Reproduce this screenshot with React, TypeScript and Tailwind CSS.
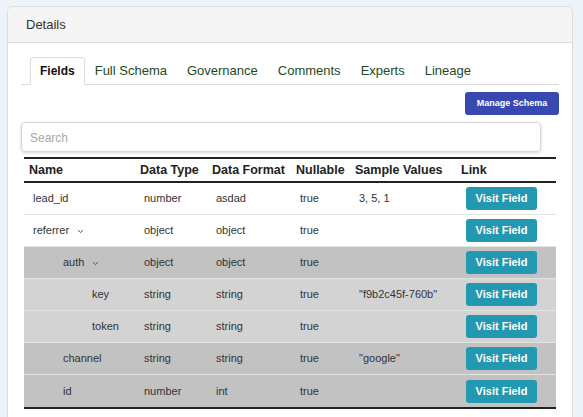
import React from 'react';

const tabs = ['Fields', 'Full Schema', 'Governance', 'Comments', 'Experts', 'Lineage'];

const cols = ['w-[111px]', 'w-[72px]', 'w-[84px]', 'w-[59px]', 'w-[106px]', 'w-[99px]'];

const rows = [
  { name: 'lead_id', type: 'number', format: 'asdad', nullable: 'true', sample: '3, 5, 1', depth: 0, bg: 'bg-white', open: false },
  { name: 'referrer', type: 'object', format: 'object', nullable: 'true', sample: '', depth: 0, bg: 'bg-white', open: true },
  { name: 'auth', type: 'object', format: 'object', nullable: 'true', sample: '', depth: 1, bg: 'bg-[#c2c2c2]', open: true },
  { name: 'key', type: 'string', format: 'string', nullable: 'true', sample: '"f9b2c45f-760b"', depth: 2, bg: 'bg-[#d3d3d3]', open: false },
  { name: 'token', type: 'string', format: 'string', nullable: 'true', sample: '', depth: 2, bg: 'bg-[#d3d3d3]', open: false },
  { name: 'channel', type: 'string', format: 'string', nullable: 'true', sample: '"google"', depth: 1, bg: 'bg-[#c2c2c2]', open: false },
  { name: 'id', type: 'number', format: 'int', nullable: 'true', sample: '', depth: 1, bg: 'bg-[#c2c2c2]', open: false },
];

const indent = ['pl-[9px]', 'pl-[39px]', 'pl-[68px]'];

function Chevron() {
  return (
    <svg width="7" height="5" viewBox="0 0 7 5" className="ml-[8px] mt-[1px]">
      <path d="M1 1.2 L3.5 3.6 L6 1.2" fill="none" stroke="#555" strokeWidth="1" />
    </svg>
  );
}

export default function App() {
  return (
    <div className="min-h-[417px] bg-[#eef2f9] pl-[7px] pr-[10px] pt-[6px] font-['Liberation_Sans',Arial,sans-serif]">
      <div className="h-[420px] rounded-[6px] border border-[#dcdcdc] bg-white overflow-hidden">
        {/* header */}
        <div className="h-[36px] bg-[#f5f5f5] border-b border-[#dcdcdc] flex items-center pl-[18px] text-[13px] text-[#333]">
          Details
        </div>

        <div className="px-[13px] pt-[14px]">
          {/* tabs */}
          <div className="flex border-b border-[#dcdcdc] pl-[9px] h-[28px]">
            {tabs.map((t, i) =>
              i === 0 ? (
                <div
                  key={t}
                  className="h-[28px] px-[9px] flex items-center border border-[#dcdcdc] border-b-white rounded-t-[4px] bg-white text-[12px] font-bold text-[#111] -mb-px"
                >
                  {t}
                </div>
              ) : (
                <div key={t} className="h-[28px] px-[10px] flex items-center text-[13px] text-[#1d4a22]">
                  {t}
                </div>
              )
            )}
          </div>

          {/* manage */}
          <div className="flex justify-end mt-[7px]">
            <button className="w-[94px] h-[23px] rounded-[3px] bg-[#3748b1] text-white text-[9px] font-bold">
              Manage Schema
            </button>
          </div>

          {/* search */}
          <div className="mt-[7px] w-[520px] h-[30px] rounded-[4px] border border-[#d6d6d6] shadow-[0_1px_3px_rgba(0,0,0,0.18)] flex items-center pl-[8px] pt-[2px] text-[12px] text-[#a8a8a8]">
            Search
          </div>

          {/* table */}
          <div className="mx-[3px] mt-[5px] border-t-2 border-[#222] border-b-2">
            <div className="flex h-[24px] items-center border-b-2 border-[#222] text-[12.5px] font-bold text-[#222]">
              {['Name', 'Data Type', 'Data Format', 'Nullable', 'Sample Values', 'Link'].map((h, i) => (
                <div key={h} className={`${cols[i]} pl-[5px] whitespace-nowrap`}>
                  {h}
                </div>
              ))}
            </div>
            {rows.map((r, idx) => (
              <div
                key={r.name}
                className={`flex h-[32px] items-center text-[11px] text-[#333] ${r.bg} ${
                  idx < rows.length - 1 ? 'border-b border-[#e3e3e3]' : ''
                }`}
              >
                <div className={`${cols[0]} ${indent[r.depth]} flex items-center`}>
                  {r.name}
                  {r.open && <Chevron />}
                </div>
                <div className={`${cols[1]} pl-[9px]`}>{r.type}</div>
                <div className={`${cols[2]} pl-[9px]`}>{r.format}</div>
                <div className={`${cols[3]} pl-[9px]`}>{r.nullable}</div>
                <div className={`${cols[4]} pl-[9px] whitespace-nowrap`}>{r.sample}</div>
                <div className={`${cols[5]} pl-[10px]`}>
                  <button className="w-[71px] h-[23px] rounded-[3px] bg-[#2299b0] text-white text-[11px] font-bold">
                    Visit Field
                  </button>
                </div>
              </div>
            ))}
          </div>
        </div>
      </div>
    </div>
  );
}
